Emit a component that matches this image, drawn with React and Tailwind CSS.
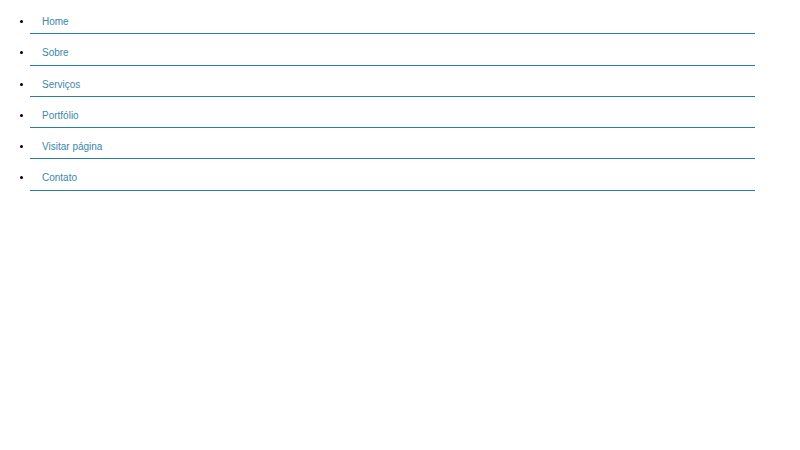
export default function App() {
  const items = ["Home", "Sobre", "Serviços", "Portfólio", "Visitar página", "Contato"];

  return (
    <div className="min-h-screen bg-white font-['Liberation_Sans',Arial,sans-serif]">
      <ul className="pl-[20px] pr-[45px] pt-[3px] text-[10px]">
        {items.map((item) => (
          <li key={item} className="flex h-[31.25px]">
            {/* bullet */}
            <span className="w-[10px] pt-[17px]">
              <span className="block h-[3px] w-[3px] rounded-full bg-black"></span>
            </span>
            <a
              href="#"
              className="block flex-1 border-b-[1.5px] border-[#2a7fa0] pl-[12px] pt-[13px] leading-[12px] text-[#3a87ab]"
            >
              {item}
            </a>
          </li>
        ))}
      </ul>
    </div>
  );
}
